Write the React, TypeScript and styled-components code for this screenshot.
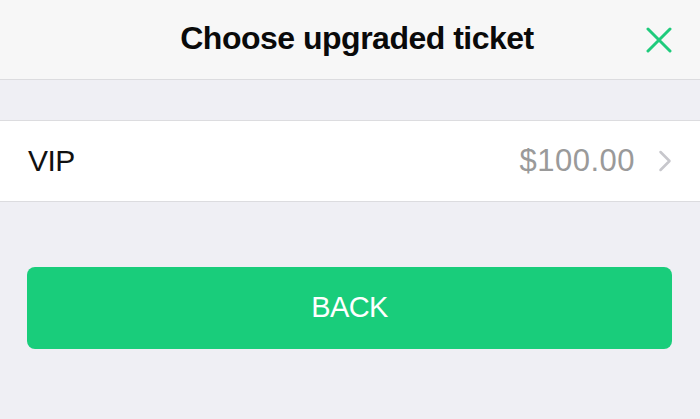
import React from "react";
import styled, { createGlobalStyle } from "styled-components";

const Global = createGlobalStyle`
  html, body { margin: 0; padding: 0; }
  body { background: #efeff4; font-family: "Liberation Sans", Arial, sans-serif; }
  #root { width: 700px; height: 419px; overflow: hidden; }
`;

const Page = styled.div`
  width: 700px;
  height: 419px;
  background: #efeff4;
  display: flex;
  flex-direction: column;
`;

const Header = styled.header`
  height: 79px;
  background: #f7f7f7;
  border-bottom: 1px solid #dcdcdf;
  display: grid;
  grid-template-columns: 1fr auto 1fr;
  align-items: center;
  padding: 0 28px 0 28px;
`;

const Title = styled.h1`
  grid-column: 2;
  margin: 0 0 3px 14px;
  font-size: 32px;
  font-weight: 700;
  color: #0a0a0a;
  letter-spacing: -0.5px;
`;

const CloseButton = styled.button`
  grid-column: 3;
  justify-self: end;
  border: 0;
  background: none;
  padding: 0;
  width: 26px;
  height: 26px;
  display: flex;
  align-items: center;
  justify-content: center;
`;

const Row = styled.div`
  margin-top: 40px;
  height: 80px;
  background: #ffffff;
  border-top: 1px solid #dcdcdf;
  border-bottom: 1px solid #dcdcdf;
  display: flex;
  align-items: center;
  padding: 0 28px 0 28px;
`;

const Label = styled.span`
  flex: 1;
  font-size: 30px;
  letter-spacing: -0.6px;
  color: #111;
`;

const Price = styled.span`
  font-size: 31px;
  letter-spacing: 0.5px;
  color: #9a9a9a;
  margin-right: 23px;
`;

const BackButton = styled.button`
  margin: 65px 28px 0 27px;
  height: 82px;
  border: 0;
  border-radius: 8px;
  background: #19cd7b;
  color: #ffffff;
  font-family: "Liberation Sans", Arial, sans-serif;
  font-size: 29px;
  letter-spacing: -0.6px;
  display: flex;
  align-items: center;
  justify-content: center;
  padding-bottom: 2px;
`;

export default function App() {
  return (
    <>
      <Global />
      <Page>
        <Header>
          <Title>Choose upgraded ticket</Title>
          <CloseButton aria-label="Close">
            <svg width="26" height="26" viewBox="0 0 26 26">
              <path d="M2 2 L24 24 M24 2 L2 24" stroke="#1fcb7c" strokeWidth="3" strokeLinecap="round" />
            </svg>
          </CloseButton>
        </Header>
        <Row>
          <Label>VIP</Label>
          <Price>$100.00</Price>
          <svg width="14" height="24" viewBox="0 0 14 24">
            <path d="M2.5 3 L11.5 12 L2.5 21" stroke="#c7c7cc" strokeWidth="2.5" fill="none" strokeLinecap="round" strokeLinejoin="round" />
          </svg>
        </Row>
        <BackButton>BACK</BackButton>
      </Page>
    </>
  );
}
